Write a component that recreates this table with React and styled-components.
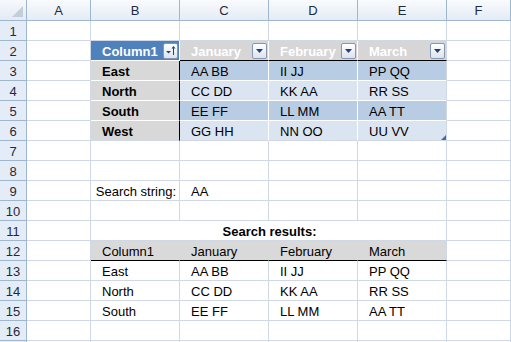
import React from 'react'
import styled, { createGlobalStyle } from 'styled-components'

const GRID = '#d0d7e5'
const HEAD_LINE = '#9eb6ce'
const WHITE = '#ffffff'
const BLACK = '#000000'

const GlobalStyle = createGlobalStyle`
  html, body {
    margin: 0;
    padding: 0;
    background: #fff;
  }
  body {
    font-family: "Liberation Sans", Arial, sans-serif;
  }
`

const Sheet = styled.div`
  display: grid;
  grid-template-columns: 27px 64px 89px 89px 89px 89px 64px;
  grid-template-rows: 21px;
  grid-auto-rows: 20px;
  width: 511px;
  height: 342px;
  overflow: hidden;
  font-size: 13px;
  color: #000;
`

const Corner = styled.div`
  box-sizing: border-box;
  position: relative;
  background: linear-gradient(#f7f9fc, #e3eaf4);
  border-right: 1px solid ${HEAD_LINE};
  border-bottom: 1px solid ${HEAD_LINE};
`

const CornerMark = styled.svg`
  position: absolute;
  right: 3px;
  bottom: 3px;
`

const ColHead = styled.div`
  box-sizing: border-box;
  display: flex;
  align-items: center;
  justify-content: center;
  background: linear-gradient(#f9fbfd, #e4ebf5);
  border-right: 1px solid ${HEAD_LINE};
  border-bottom: 1px solid ${HEAD_LINE};
  color: #1e2a3c;
  padding-top: 1px;
`

const RowHead = styled.div`
  box-sizing: border-box;
  display: flex;
  align-items: center;
  justify-content: center;
  background: #e4ecf7;
  border-right: 1px solid ${HEAD_LINE};
  border-bottom: 1px solid ${HEAD_LINE};
  color: #1e2a3c;
  padding-top: 1px;
`

const Cell = styled.div`
  box-sizing: border-box;
  position: relative;
  display: flex;
  align-items: center;
  justify-content: ${p => (p.$align === 'right' ? 'flex-end' : p.$align === 'center' ? 'center' : 'flex-start')};
  padding: 2px ${p => (p.$align === 'right' ? '3px' : '0')} 0 ${p => (p.$indent ? '11px' : '2px')};
  grid-column: ${p => (p.$span ? `span ${p.$span}` : 'auto')};
  background: ${p => p.$fill || WHITE};
  border-right: 1px solid ${p => p.$right || GRID};
  border-bottom: 1px solid ${p => p.$bottom || GRID};
  font-weight: ${p => (p.$bold ? 700 : 400)};
  color: ${p => p.$color || '#000'};
  white-space: nowrap;
  overflow: hidden;
`

const FilterButton = styled.span`
  box-sizing: border-box;
  width: 15px;
  height: 16px;
  margin-left: auto;
  margin-right: 1px;
  margin-top: -2px;
  border: 1px solid #8796b3;
  border-radius: 2px;
  background: linear-gradient(#ffffff, #dde3ec);
  display: flex;
  align-items: center;
  justify-content: center;
`

const ResizeHandle = styled.svg`
  position: absolute;
  right: 0;
  bottom: 0;
`

const Dropdown = ({ sorted }) => (
  <FilterButton>
    {sorted ? (
      <svg width="11" height="11" viewBox="0 0 11 11">
        <polygon points="1,6 6,6 3.5,8.5" fill="#263f7a" />
        <line x1="8.5" y1="2" x2="8.5" y2="10" stroke="#263f7a" strokeWidth="1" />
        <polygon points="6.5,3.5 10.5,3.5 8.5,1" fill="#263f7a" />
      </svg>
    ) : (
      <svg width="7" height="4" viewBox="0 0 7 4">
        <polygon points="0,0 7,0 3.5,4" fill="#263f7a" />
      </svg>
    )}
  </FilterButton>
)

const columns = ['A', 'B', 'C', 'D', 'E', 'F']

const tableRows = [
  ['East', 'AA BB', 'II JJ', 'PP QQ'],
  ['North', 'CC DD', 'KK AA', 'RR SS'],
  ['South', 'EE FF', 'LL MM', 'AA TT'],
  ['West', 'GG HH', 'NN OO', 'UU VV'],
]

const headers = ['Column1', 'January', 'February', 'March']

const BAND_DARK = '#b8cce4'
const BAND_LIGHT = '#dbe5f1'
const FIRST_COL = '#d8d8d8'
const HEAD_GRAY = '#d6d6d6'
const HEAD_BLUE = '#4f81bd'

const EmptyRow = ({ n }) => (
  <>
    <RowHead>{n}</RowHead>
    {columns.map(c => <Cell key={c} />)}
  </>
)

export default function App() {
  return (
    <>
      <GlobalStyle />
      <Sheet>
        <Corner>
          <CornerMark width="11" height="11" viewBox="0 0 11 11">
            <polygon points="11,0 11,11 0,11" fill="#c3cddb" />
          </CornerMark>
        </Corner>
        {columns.map(c => <ColHead key={c}>{c}</ColHead>)}

        <EmptyRow n={1} />

        {/* row 2: table header */}
        <RowHead>2</RowHead>
        <Cell />
        <Cell $fill={HEAD_BLUE} $bold $indent $color="#fff" $right={WHITE} $bottom={WHITE}>
          {headers[0]}
          <Dropdown sorted />
        </Cell>
        {headers.slice(1).map((h, i) => (
          <Cell key={h} $fill={HEAD_GRAY} $bold $indent $color="#fff" $right={i === 2 ? GRID : WHITE} $bottom={BLACK}>
            {h}
            <Dropdown />
          </Cell>
        ))}
        <Cell />

        {tableRows.map((row, r) => (
          <React.Fragment key={row[0]}>
            <RowHead>{r + 3}</RowHead>
            <Cell />
            <Cell $fill={FIRST_COL} $bold $indent $right={BLACK} $bottom={r === 3 ? GRID : WHITE}>
              {row[0]}
            </Cell>
            {row.slice(1).map((v, i) => (
              <Cell
                key={i}
                $fill={r % 2 === 0 ? BAND_DARK : BAND_LIGHT}
                $indent
                $right={i === 2 ? GRID : WHITE}
                $bottom={r === 3 ? GRID : WHITE}
              >
                {v}
                {r === 3 && i === 2 && (
                  <ResizeHandle width="5" height="5" viewBox="0 0 5 5">
                    <polygon points="5,0 5,5 0,5" fill="#4a64b0" />
                  </ResizeHandle>
                )}
              </Cell>
            ))}
            <Cell />
          </React.Fragment>
        ))}

        <EmptyRow n={7} />
        <EmptyRow n={8} />

        <RowHead>9</RowHead>
        <Cell />
        <Cell $align="right">Search string:</Cell>
        <Cell $indent>AA</Cell>
        <Cell />
        <Cell />
        <Cell />

        <EmptyRow n={10} />

        <RowHead>11</RowHead>
        <Cell />
        <Cell $span={4} $align="center" $bold>Search results:</Cell>
        <Cell />

        <RowHead>12</RowHead>
        <Cell />
        {headers.map((h, i) => (
          <Cell key={h} $fill="#d9d9d9" $indent $right={i === 3 ? GRID : '#d9d9d9'} $bottom={BLACK}>
            {h}
          </Cell>
        ))}
        <Cell />

        {tableRows.slice(0, 3).map((row, r) => (
          <React.Fragment key={row[0]}>
            <RowHead>{r + 13}</RowHead>
            <Cell />
            {row.map((v, i) => <Cell key={i} $indent>{v}</Cell>)}
            <Cell />
          </React.Fragment>
        ))}

        <EmptyRow n={16} />
        {/* row 17 is only a sliver at the bottom edge */}
        <EmptyRow n="" />
      </Sheet>
    </>
  )
}
